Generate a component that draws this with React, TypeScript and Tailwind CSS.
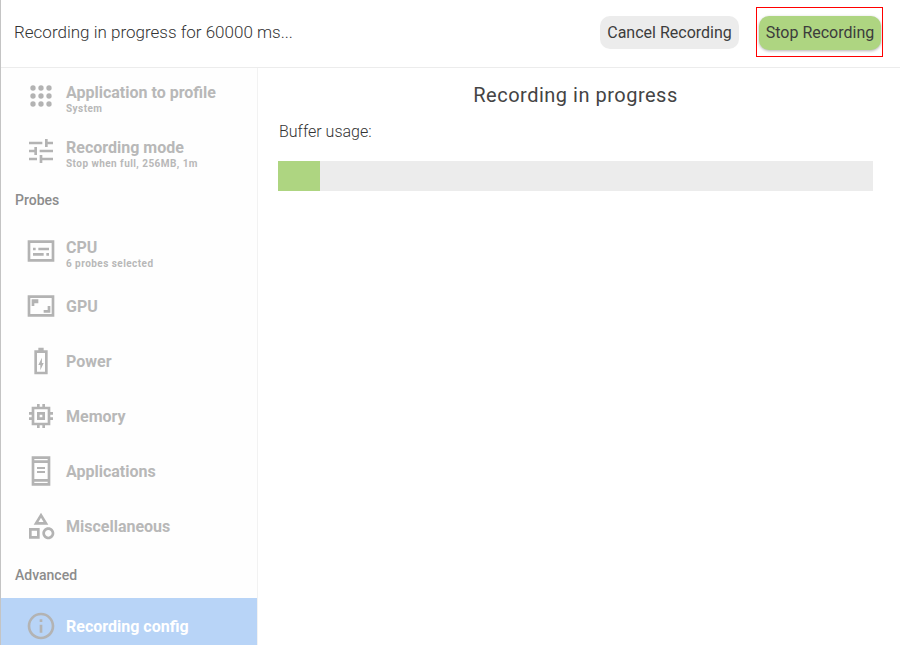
import type { ReactNode } from 'react';

// Material-style outline icons, all on a 24 grid drawn at 32px
function Icon({ children }: { children: ReactNode }) {
  return (
    <svg viewBox="0 0 24 24" className="w-8 h-8 shrink-0 fill-[#b3b3b3]">
      {children}
    </svg>
  );
}

const dots = [6, 12, 18].flatMap((y) => [6, 12, 18].map((x) => [x, y]));

const icons: Record<string, ReactNode> = {
  apps: dots.map(([x, y]) => <circle key={`${x}-${y}`} cx={x} cy={y} r="2" />),
  tune: <path d="M3 17v2h6v-2H3zM3 5v2h10V5H3zm10 16v-2h8v-2h-8v-2h-2v6h2zM7 9v2H3v2h4v2h2V9H7zm14 4v-2H11v2h10zm-6-4h2V7h4V5h-4V3h-2v6z" />,
  cpu: <path fillRule="evenodd" d="M22 4H2v16h20V4zM20 18H4V6h16v12zM6 9.500h2v2H6zm0 4h8v2H6zm10 0h2v2h-2zm-6-4h8v2h-8z" />,
  gpu: <path fillRule="evenodd" d="M22 4H2v16h20V4zm-2 14H4V6h16v12zM19 12h-2v3h-3v2h5v-5zM7 10h3V7H5v5h2v-2z" />,
  power: <path fillRule="evenodd" d="M17 4h-3V2h-4v2H7v18h10V4zm-2 16H9V6h6v14zM11.500 19l2.500-5.500h-1.300V9.500L10 15h1.500v4z" />,
  memory: <path fillRule="evenodd" d="M15 9H9v6h6V9zm-2 4h-2v-2h2v2zm8-2V9h-2V5h-4V3h-2v2h-2V3H9v2H5v4H3v2h2v2H3v2h2v4h4v2h2v-2h2v2h2v-2h4v-4h2v-2h-2v-2h2zm-4 6H7V7h10v10z" />,
  apk: <path fillRule="evenodd" d="M19 1H5v22h14V1zM7 4V3h10v1H7zm0 14V6h10v12H7zm0 3v-1h10v1H7zM9 9h6v1.500H9zm0 3h6v1.500H9z" />,
  misc: <path fillRule="evenodd" d="M12 2l-5.500 9h11L12 2zm0 3.840L13.930 9h-3.870L12 5.840zM17.500 13c-2.490 0-4.500 2.010-4.500 4.500s2.010 4.500 4.500 4.500 4.500-2.010 4.500-4.500-2.010-4.500-4.500-4.500zm0 7c-1.380 0-2.500-1.120-2.500-2.500s1.120-2.500 2.500-2.500 2.500 1.120 2.500 2.500-1.120 2.500-2.500 2.500zM3 21.500h8v-8H3v8zm2-6h4v4H5v-4z" />,
  info: <path fillRule="evenodd" d="M11 7h2v2h-2zm0 4h2v6h-2zm1-9C6.480 2 2 6.480 2 12s4.480 10 10 10 10-4.480 10-10S17.520 2 12 2zm0 18c-4.410 0-8-3.590-8-8s3.590-8 8-8 8 3.590 8 8-3.590 8-8 8z" />,
};

function NavItem({ icon, title, sub, active }: { icon: string; title: string; sub?: string; active?: boolean }) {
  return (
    <div className={`h-[55px] shrink-0 flex items-center gap-[9px] pl-6 ${active ? 'bg-[#b8d4f7]' : ''}`}>
      <Icon>{icons[icon]}</Icon>
      <div className={`flex flex-col ${sub ? 'mt-2' : 'mt-0.5'} ${active ? 'text-white' : 'text-[#b8b8b8]'}`}>
        <span className="text-base leading-[18px] font-bold">{title}</span>
        {sub && <span className="text-[10px] leading-[13px] font-bold tracking-[0.45px]">{sub}</span>}
      </div>
    </div>
  );
}

function GroupLabel({ children }: { children: ReactNode }) {
  return (
    <div className="h-[45px] shrink-0 flex items-center pb-0.5 pl-[14px] text-sm font-medium text-[#8c8c8c]">{children}</div>
  );
}

export default function App() {
  return (
    <div className="relative h-[645px] w-[900px] overflow-hidden flex flex-col border-l border-[#c4c4c4] bg-white font-['Roboto',sans-serif] text-[#333]">
      <header className="h-[68px] shrink-0 flex items-center border-b border-[#ececec] pb-0.5 pl-[13px] pr-[19px]">
        <span className="flex-1 text-[17px] font-light">Recording in progress for 60000 ms...</span>
        <button className="h-[33px] w-[139px] rounded-[10px] bg-[#ececec] text-base text-[#3c3c3c]">Cancel Recording</button>
        <button className="ml-5 h-[34px] w-[122px] rounded-[10px] bg-[#aed581] text-base text-[#3c3c3c] shadow-[0_1px_3px_rgba(0,0,0,0.3)]">Stop Recording</button>
      </header>

      {/* Highlight box around the stop button */}
      <div className="absolute left-[755px] top-[7px] w-[127px] h-[50px] border border-[#ff0000]" />

      <div className="flex flex-1 min-h-0">
        <nav className="w-[257px] shrink-0 flex flex-col border-r border-[#f2f2f2] bg-[#fefefe]">
          <NavItem icon="apps" title="Application to profile" sub="System" />
          <NavItem icon="tune" title="Recording mode" sub="Stop when full, 256MB, 1m" />
          <GroupLabel>Probes</GroupLabel>
          <NavItem icon="cpu" title="CPU" sub="6 probes selected" />
          <NavItem icon="gpu" title="GPU" />
          <NavItem icon="power" title="Power" />
          <NavItem icon="memory" title="Memory" />
          <NavItem icon="apk" title="Applications" />
          <NavItem icon="misc" title="Miscellaneous" />
          <GroupLabel>Advanced</GroupLabel>
          <NavItem icon="info" title="Recording config" active />
        </nav>

        <main className="w-[595px] ml-5 flex flex-col">
          <h2 className="mt-[14px] text-center text-xl leading-[26px] tracking-[0.5px] text-[#444]">Recording in progress</h2>
          <p className="mt-[14px] pl-px text-base leading-[20px] font-light">Buffer usage:</p>
          <div className="mt-[19px] h-[30px] bg-[#ececec]">
            <div className="h-full w-[42px] bg-[#aed581]" />
          </div>
        </main>
      </div>
    </div>
  );
}
